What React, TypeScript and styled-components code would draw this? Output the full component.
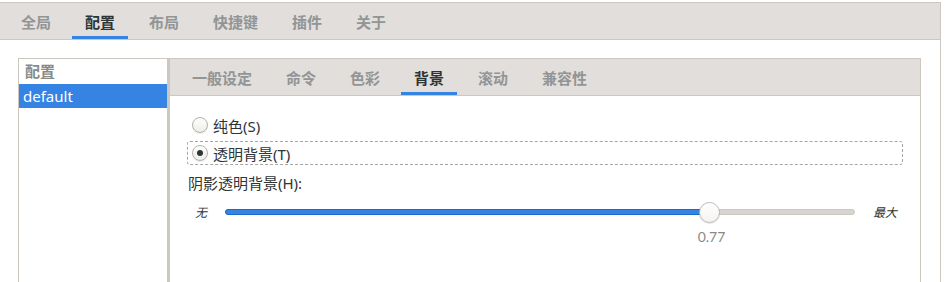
import React from 'react'
import styled, { createGlobalStyle } from 'styled-components'

const GlobalStyle = createGlobalStyle`
  html, body {
    margin: 0;
    padding: 0;
    background: #ffffff;
    overflow: hidden;
  }
  body {
    font-family: "Noto Sans", "Noto Sans CJK SC", sans-serif;
    font-size: 15px;
    color: #2e3436;
  }
`

const Window = styled.div`
  width: 940px;
  height: 290px;
  margin-top: 2px;
  border-top: 1px solid #cdc7c2;
  border-right: 1px solid #cdc7c2;
  display: flex;
  flex-direction: column;
`

const TabBar = styled.div<{ $inset: number }>`
  display: flex;
  gap: 8px;
  height: 36px;
  padding-left: ${p => p.$inset}px;
  background: #e1dedb;
  border-bottom: 1px solid #cdc7c2;
  flex-shrink: 0;
`

const Tab = styled.div<{ $active?: boolean }>`
  display: flex;
  align-items: center;
  padding: 3px 13px 0;
  font-weight: bold;
  font-size: 15px;
  color: ${p => (p.$active ? '#2e3436' : '#929595')};
  border-bottom: 3px solid ${p => (p.$active ? '#3584e4' : 'transparent')};
`

const Body = styled.div`
  flex: 1;
  display: flex;
  padding: 18px 19px 0 18px;
`

const ListBox = styled.div`
  width: 148px;
  border-left: 1px solid #cdc7c2;
  border-top: 1px solid #cdc7c2;
  background: #fff;
`

const ListHeader = styled.div`
  height: 25px;
  line-height: 25px;
  padding-left: 6px;
  font-weight: bold;
  color: #888a85;
`

const ListRow = styled.div<{ $selected?: boolean }>`
  height: 24px;
  line-height: 24px;
  padding-left: 4px;
  background: ${p => (p.$selected ? '#3584e4' : 'transparent')};
  color: ${p => (p.$selected ? '#fff' : '#2e3436')};
`

const Splitter = styled.div`
  width: 3px;
  background: #cdc7c2;
`

const Panel = styled.div`
  flex: 1;
  display: flex;
  flex-direction: column;
  border-top: 1px solid #cdc7c2;
  border-right: 1px solid #cdc7c2;
`

const PanelContent = styled.div`
  padding: 17px 17px 0 17px;
  display: flex;
  flex-direction: column;
`

const RadioRow = styled.div<{ $focused?: boolean }>`
  display: flex;
  align-items: center;
  gap: 5px;
  height: 22px;
  padding-left: 4px;
  border: 1px dashed ${p => (p.$focused ? '#a6a6a6' : 'transparent')};
  border-radius: 3px;
  margin-bottom: 4px;
`

const RadioDot = styled.span<{ $checked?: boolean }>`
  width: 14px;
  height: 14px;
  border-radius: 50%;
  border: 1px solid #b6b0aa;
  background: linear-gradient(#ffffff, #ececea);
  box-shadow: 0 1px 1px rgba(0, 0, 0, 0.08);
  display: flex;
  align-items: center;
  justify-content: center;
  &::after {
    content: '';
    width: 6px;
    height: 6px;
    border-radius: 50%;
    background: ${p => (p.$checked ? '#2e3436' : 'transparent')};
  }
`

const FieldLabel = styled.div`
  margin-top: 5px;
  line-height: 18px;
  padding-left: 1px;
`

const SliderRow = styled.div`
  display: flex;
  align-items: center;
  gap: 18px;
  height: 24px;
  margin-top: 8px;
  padding: 0 6px 0 8px;
`

const EdgeLabel = styled.span`
  font-size: 12px;
  font-style: italic;
  color: #2e3436;
`

const Track = styled.div`
  position: relative;
  flex: 1;
  height: 4px;
  border-radius: 3px;
  background: #d8d4d0;
  border: 1px solid #cdc7c2;
`

const Fill = styled.div`
  position: absolute;
  left: -1px;
  top: -1px;
  bottom: -1px;
  border-radius: 3px;
  background: #3584e4;
  border: 1px solid #1b6acb;
`

const Handle = styled.div`
  position: absolute;
  top: 50%;
  width: 19px;
  height: 19px;
  margin-left: -11px;
  margin-top: -10px;
  border-radius: 50%;
  background: linear-gradient(#ffffff, #f4f3f2);
  border: 1px solid #bfb8b1;
  box-shadow: 0 1px 1px rgba(0, 0, 0, 0.1);
`

const ValueRow = styled.div`
  position: relative;
  height: 18px;
  margin-top: 4px;
  margin-left: 44px;
  margin-right: 48px;
`

const Value = styled.span`
  position: absolute;
  top: 0;
  transform: translateX(-50%);
  font-family: Lato, "Noto Sans", sans-serif;
  font-size: 14px;
  color: #888a85;
`

const topTabs = ['全局', '配置', '布局', '快捷键', '插件', '关于']
const innerTabs = ['一般设定', '命令', '色彩', '背景', '滚动', '兼容性']

export default function App() {
  const value = 0.77
  const pct = `${value * 100}%`
  return (
    <>
      <GlobalStyle />
      <Window>
        <TabBar $inset={8}>
          {topTabs.map(t => (
            <Tab key={t} $active={t === '配置'}>
              {t}
            </Tab>
          ))}
        </TabBar>
        <Body>
          <ListBox>
            <ListHeader>配置</ListHeader>
            <ListRow $selected>default</ListRow>
          </ListBox>
          <Splitter />
          <Panel>
            <TabBar $inset={9}>
              {innerTabs.map(t => (
                <Tab key={t} $active={t === '背景'}>
                  {t}
                </Tab>
              ))}
            </TabBar>
            <PanelContent>
              <RadioRow>
                <RadioDot />
                纯色(S)
              </RadioRow>
              <RadioRow $focused>
                <RadioDot $checked />
                透明背景(T)
              </RadioRow>
              <FieldLabel>阴影透明背景(H):</FieldLabel>
              <SliderRow>
                <EdgeLabel>无</EdgeLabel>
                <Track>
                  <Fill style={{ width: pct }} />
                  <Handle style={{ left: pct }} />
                </Track>
                <EdgeLabel>最大</EdgeLabel>
              </SliderRow>
              <ValueRow>
                <Value style={{ left: pct }}>{value.toFixed(2)}</Value>
              </ValueRow>
            </PanelContent>
          </Panel>
        </Body>
      </Window>
    </>
  )
}
